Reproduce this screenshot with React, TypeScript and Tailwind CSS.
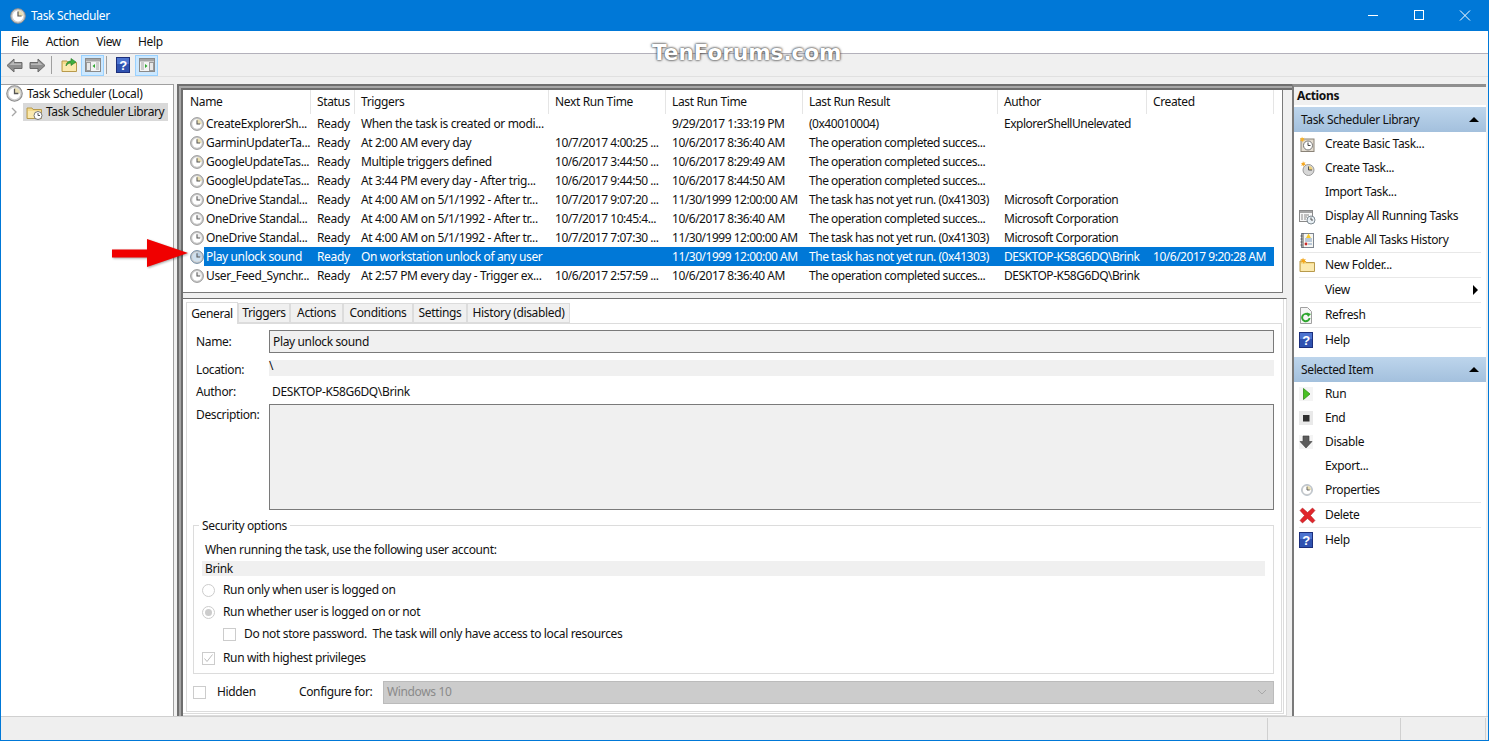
import type { ReactNode } from "react";

const tasks = [
  ["CreateExplorerSh...", "When the task is created or modi...", "", "9/29/2017 1:33:19 PM", "(0x40010004)", "ExplorerShellUnelevated", ""],
  ["GarminUpdaterTa...", "At 2:00 AM every day", "10/7/2017 4:00:25 ...", "10/6/2017 8:36:40 AM", "The operation completed succes...", "", ""],
  ["GoogleUpdateTas...", "Multiple triggers defined", "10/6/2017 3:44:50 ...", "10/6/2017 8:29:49 AM", "The operation completed succes...", "", ""],
  ["GoogleUpdateTas...", "At 3:44 PM every day - After trig...", "10/6/2017 9:44:50 ...", "10/6/2017 8:44:50 AM", "The operation completed succes...", "", ""],
  ["OneDrive Standal...", "At 4:00 AM on 5/1/1992 - After tr...", "10/7/2017 9:07:20 ...", "11/30/1999 12:00:00 AM", "The task has not yet run. (0x41303)", "Microsoft Corporation", ""],
  ["OneDrive Standal...", "At 4:00 AM on 5/1/1992 - After tr...", "10/7/2017 10:45:4...", "10/6/2017 8:36:40 AM", "The operation completed succes...", "Microsoft Corporation", ""],
  ["OneDrive Standal...", "At 4:00 AM on 5/1/1992 - After tr...", "10/7/2017 7:07:30 ...", "11/30/1999 12:00:00 AM", "The task has not yet run. (0x41303)", "Microsoft Corporation", ""],
  ["Play unlock sound", "On workstation unlock of any user", "", "11/30/1999 12:00:00 AM", "The task has not yet run. (0x41303)", "DESKTOP-K58G6DQ\\Brink", "10/6/2017 9:20:28 AM"],
  ["User_Feed_Synchr...", "At 2:57 PM every day - Trigger ex...", "10/6/2017 2:57:59 ...", "10/6/2017 8:36:40 AM", "The operation completed succes...", "DESKTOP-K58G6DQ\\Brink", ""],
];

const headers = [
  ["Name", "w-[127px]"],
  ["Status", "w-[44px]"],
  ["Triggers", "w-[194px]"],
  ["Next Run Time", "w-[117px]"],
  ["Last Run Time", "w-[137px]"],
  ["Last Run Result", "w-[195px]"],
  ["Author", "w-[149px]"],
  ["Created", "w-[127px]"],
];

function Clock({ size = 14, face = "#fff", rim = "#8d8d8d", wedge = "#e9dfb4" }: { size?: number; face?: string; rim?: string; wedge?: string }) {
  return (
    <svg width={size} height={size} viewBox="0 0 16 16" className="shrink-0">
      <circle cx="8" cy="8" r="7.3" fill="#cfcfcf" stroke={rim} />
      <circle cx="8" cy="8" r="5.4" fill={face} />
      <path d="M8 8V2.6A5.4 5.4 0 0 1 13.4 8Z" fill={wedge} />
      <path d="M8 3.6V8h3.6" fill="none" stroke="#555" strokeWidth="1.2" />
    </svg>
  );
}

function HelpIcon() {
  return (
    <svg width="14" height="16" viewBox="0 0 14 16" className="shrink-0">
      <rect x="0.5" y="0.5" width="13" height="15" fill="#2f52b0" stroke="#1c2f7c" />
      <path d="M1 1h12v6H1z" fill="#4d74d0" />
      <text x="7" y="13" textAnchor="middle" fontSize="13" fontWeight="700" fill="#fff" fontFamily="Liberation Sans">?</text>
    </svg>
  );
}

function NavArrow({ flip }: { flip?: boolean }) {
  return (
    <svg width="17" height="15" viewBox="0 0 17 15" className={flip ? "-scale-x-100" : ""}>
      <path d="M1 7.5 8 1v3.5h8v6H8V14Z" fill="#8f8f8f" stroke="#6b6b6b" />
      <path d="M3.5 7 8 3v2.5h7V7Z" fill="#b9b9b9" />
    </svg>
  );
}

function PaneToggle({ side }: { side: "left" | "right" }) {
  return (
    <svg width="16" height="14" viewBox="0 0 16 14">
      <rect x="0.5" y="0.5" width="15" height="13" fill="#f3f3f3" stroke="#8a8a8a" />
      <rect x="1" y="1" width="14" height="2.5" fill="#a5a5a5" />
      {side === "left" ? (
        <>
          <rect x="1.500" y="4.500" width="4" height="8" fill="#e8e8e8" stroke="#9a9a9a" />
          <path d="M10 6v4L7.500 8Z" fill="#2fa82f" />
          <path d="M11 5h3M11 7h3M11 9h3M11 11h3" stroke="#a5a5a5" />
        </>
      ) : (
        <>
          <rect x="10.500" y="4.500" width="4" height="8" fill="#e8e8e8" stroke="#9a9a9a" />
          <path d="M6 6v4l2.500-2Z" fill="#2fa82f" />
          <path d="M2 5h3M2 7h3M2 9h3M2 11h3" stroke="#a5a5a5" />
        </>
      )}
    </svg>
  );
}

function FolderIcon({ badge }: { badge?: "clock" | "up" | "new" }) {
  return (
    <svg width="17" height="16" viewBox="0 0 17 16" className="shrink-0">
      <path d="M1 4h5l1 1.500h8.500V14.500H1Z" fill="#f6dc8c" stroke="#b89a4c" />
      <path d="M2 7h13v7H2Z" fill="#fbe9ae" />
      {badge === "up" && <path d="M5 9c0-3 2-5 5-5V1.500L15 5l-5 3.500V6c-2 0-4 1-5 3Z" fill="#3fae3f" stroke="#257a25" strokeWidth="0.6" />}
      {badge === "new" && <path d="M4 0.500l.8 2 2-.6-1 1.800 1.700 1.200-2.100.3L5 7 3.800 5 1.700 5.500 2.900 3.700 1.300 2.300l2.200-.1Z" fill="#f2a51a" />}
      {badge === "clock" && (
        <g>
          <circle cx="12" cy="11.500" r="4" fill="#fff" stroke="#777" />
          <path d="M12 9v2.500h2" fill="none" stroke="#555" />
        </g>
      )}
    </svg>
  );
}

function ActionIcon({ name }: { name: string }) {
  if (name === "basic")
    return (
      <svg width="17" height="17" viewBox="0 0 17 17">
        <rect x="2" y="3" width="13" height="12.500" fill="#e3dcd0" stroke="#8a8378" />
        <circle cx="9" cy="9.500" r="4.500" fill="#fff" stroke="#777" />
        <path d="M9 6.500v3h2.500" fill="none" stroke="#444" />
        <path d="M3 0.500l.7 1.700 1.800-.5-.9 1.600 1.400 1.100-1.800.2L4 6.500 3 4.800l-1.900.4 1-1.600L.8 2.300l1.800-.1Z" fill="#f4b02a" />
      </svg>
    );
  if (name === "task")
    return (
      <svg width="17" height="17" viewBox="0 0 17 17">
        <circle cx="9.500" cy="10" r="5.500" fill="#d7d7d7" stroke="#9a9a9a" />
        <path d="M9.500 10V6a4 4 0 0 1 4 4Z" fill="#f0d27c" />
        <path d="M9.500 6.500V10H13" fill="none" stroke="#555" />
        <path d="M4 1l.7 1.700 1.800-.5-.9 1.600 1.400 1.100-1.800.2L5 7 4 5.300l-1.900.4 1-1.600-1.300-1 1.800-.1Z" fill="#f4a722" />
      </svg>
    );
  if (name === "running")
    return (
      <svg width="17" height="17" viewBox="0 0 17 17">
        <rect x="0.500" y="2.500" width="13" height="11" fill="#f7f7f7" stroke="#8a8a8a" />
        <rect x="1" y="3" width="12" height="2" fill="#a5a5a5" />
        <path d="M2 7h2M5 7h5M2 9h2M5 9h3M2 11h2M5 11h2" stroke="#888" />
        <circle cx="12" cy="12" r="4" fill="#e9f0f5" stroke="#7f8a92" />
        <path d="M12 9.500V12h2" fill="none" stroke="#555" />
      </svg>
    );
  if (name === "history")
    return (
      <svg width="17" height="17" viewBox="0 0 17 17">
        <rect x="2.500" y="1.500" width="12" height="14" fill="#f6f6f2" stroke="#7d8590" />
        <path d="M4 1v15M1.500 4h2M1.500 7h2M1.500 10h2M1.500 13h2" stroke="#555" />
        <path d="M6 7h7M6 9h7M9 12h4" stroke="#7f9bbf" />
        <path d="M9.500 1.500 12 6H7Z" fill="#f6c92c" />
        <circle cx="7" cy="12" r="1.400" fill="#c92a2a" />
      </svg>
    );
  if (name === "folder") return <FolderIcon badge="new" />;
  if (name === "refresh")
    return (
      <svg width="14" height="17" viewBox="0 0 14 17">
        <path d="M1.500.5h7l4 4v12h-11Z" fill="#f5f5f5" stroke="#a0a0a0" />
        <path d="M10.500 11A3.700 3.700 0 1 1 9.500 8" fill="none" stroke="#2ea52e" strokeWidth="2" />
        <path d="M8 5.500 12 7 9 10Z" fill="#2ea52e" />
      </svg>
    );
  if (name === "help") return <HelpIcon />;
  if (name === "run")
    return (
      <svg width="14" height="14" viewBox="0 0 14 14">
        <rect width="14" height="14" fill="#f4f4f4" />
        <path d="M4.500 1.500 11 7l-6.500 5.500Z" fill="#48c022" stroke="#2f8a14" strokeWidth="0.8" />
      </svg>
    );
  if (name === "end")
    return (
      <svg width="14" height="14" viewBox="0 0 14 14">
        <rect width="14" height="14" fill="#e9e9e9" />
        <rect x="4" y="4" width="6.500" height="6.500" fill="#2e2e2e" />
      </svg>
    );
  if (name === "disable")
    return (
      <svg width="14" height="14" viewBox="0 0 14 14">
        <rect width="14" height="14" fill="#f4f4f4" />
        <path d="M4 1h6v5.500h3L7 13 1 6.500h3Z" fill="#5c5c5c" stroke="#3e3e3e" strokeWidth="0.6" />
      </svg>
    );
  if (name === "props") return <span className="ml-[2px] flex"><Clock size={12} rim="#a9b6c2" /></span>;
  if (name === "delete")
    return (
      <svg width="17" height="17" viewBox="0 0 17 17">
        <path d="M1 3.500 3.500 1 8.500 5.500 13.500 1 16 3.500 11.500 8.500 16 13.500 13.500 16 8.500 11.500 3.500 16 1 13.500 5.500 8.500Z" fill="#e0262c" stroke="#a81c20" strokeWidth="0.5" />
      </svg>
    );
  return null;
}

function ActionRow({ icon, label, sep, caret, h = "h-6" }: { icon?: string; label: string; sep?: boolean; caret?: boolean; h?: string }) {
  return (
    <div className={`ml-[5px] mr-[5px] flex items-center ${h} ${sep ? "border-b border-[#e8e8e8]" : ""}`}>
      <span className="flex w-[26px] shrink-0 items-center">{icon && <ActionIcon name={icon} />}</span>
      <span>{label}</span>
      {caret && <span className="ml-auto mr-[3px] h-0 w-0 border-y-[5px] border-l-[5px] border-y-transparent border-l-black" />}
    </div>
  );
}

function SectionHeader({ label }: { label: string }) {
  return (
    <div className="flex h-[25px] items-center justify-between bg-gradient-to-b from-[#bdd5ec] to-[#a3c0dd] pl-[7px] pr-[7px]">
      <span>{label}</span>
      <span className="h-0 w-0 border-x-[5px] border-b-[5px] border-x-transparent border-b-black" />
    </div>
  );
}

function Radio({ on, children }: { on?: boolean; children: ReactNode }) {
  return (
    <div className="flex h-[22px] items-center">
      <span className="mr-2 flex h-[13px] w-[13px] items-center justify-center rounded-full border border-[#cccccc]">
        {on && <span className="h-[7px] w-[7px] rounded-full bg-[#cccccc]" />}
      </span>
      {children}
    </div>
  );
}

function Check({ on }: { on?: boolean }) {
  return (
    <span className="flex h-[13px] w-[13px] shrink-0 items-center justify-center border border-[#cccccc]">
      {on && (
        <svg width="11" height="11" viewBox="0 0 11 11">
          <path d="M1.500 5.500 4 8.500 9.500 1.500" fill="none" stroke="#bcbcbc" />
        </svg>
      )}
    </span>
  );
}

// concentric gray bands along the top and left of the center column
function Stripes({ children }: { children: ReactNode }) {
  return (
    <div className="ml-[3px] w-[1115px] shrink-0 border-t-2 border-l-2 border-[#6e6e6e]">
      <div className="h-full border-t-2 border-l-2 border-[#a6a6a6]">
        <div className="h-full border-t-2 border-l-2 border-[#6e6e6e]">{children}</div>
      </div>
    </div>
  );
}

export default function App() {
  return (
    <div className="relative flex h-[741px] w-[1489px] flex-col overflow-hidden border-x border-b border-[#0078d7] bg-[#f0f0f0] font-['Noto_Sans',sans-serif] text-[12px] tracking-[-0.36px] text-[#111]">
      <div className="flex h-[31px] shrink-0 items-center bg-[#0078d7] pl-[9px] text-white">
        <Clock size={16} />
        <span className="ml-[5px]">Task Scheduler</span>
        <div className="ml-auto flex items-center">
          <svg width="46" height="31" viewBox="0 0 46 31"><path d="M18 15.500h10" stroke="#fff" /></svg>
          <svg width="46" height="31" viewBox="0 0 46 31"><rect x="18.500" y="10.500" width="9" height="9" fill="none" stroke="#fff" /></svg>
          <svg width="46" height="31" viewBox="0 0 46 31"><path d="M18 10.500l10 10M28 10.500l-10 10" stroke="#fff" /></svg>
        </div>
      </div>

      <div className="flex h-[23px] shrink-0 items-center gap-[17px] border-b border-[#b3b1bb] bg-white pl-[10px]">
        <span>File</span>
        <span>Action</span>
        <span>View</span>
        <span>Help</span>
      </div>

      <div className="flex h-[23px] shrink-0 items-center border-b border-[#e0e0e0] bg-[#f0f0f0] pl-[5px]">
        <NavArrow />
        <span className="ml-[6px]"><NavArrow flip /></span>
        <span className="ml-[5px] h-[18px] w-px bg-[#a0a0a0]" />
        <span className="ml-[9px] flex"><FolderIcon badge="up" /></span>
        <span className="ml-[3px] flex h-[21px] w-[23px] items-center justify-center border border-[#99d1ff] bg-[#cce8ff]"><PaneToggle side="left" /></span>
        <span className="ml-[2px] h-[18px] w-px bg-[#a0a0a0]" />
        <span className="ml-[9px] flex"><HelpIcon /></span>
        <span className="ml-[5px] flex h-[21px] w-[23px] items-center justify-center border border-[#99d1ff] bg-[#cce8ff]"><PaneToggle side="right" /></span>
      </div>

      <div className="flex min-h-0 flex-1 pt-[7px]">
        <div className="h-full w-[173px] shrink-0 border-t border-r border-[#a0a0a0] bg-white">
          <div className="flex h-[17px] items-center pl-[5px]">
            <Clock size={17} />
            <span className="ml-[4px] whitespace-nowrap">Task Scheduler (Local)</span>
          </div>
          <div className="mt-px flex h-[18px] items-center pl-[9px]">
            <svg width="8" height="10" viewBox="0 0 8 10"><path d="M2 1l4 4-4 4" fill="none" stroke="#a6a6a6" strokeWidth="1.300" /></svg>
            <span className="ml-[5px] flex h-[18px] items-center whitespace-nowrap bg-[#d9d9d9] pr-[4px] pl-[3px]">
              <FolderIcon badge="clock" />
              <span className="ml-[3px]">Task Scheduler Library</span>
            </span>
          </div>
        </div>

        <Stripes>
          <div className="flex h-full flex-col">
            <div className="h-[203px] w-[1100px] shrink-0 border-r border-b border-[#7a7a7a] bg-white pl-px">
              <div className="flex h-[24px]">
                {headers.map(([label, w]) => (
                  <div key={label} className={`${w} flex shrink-0 items-center border-r border-[#e5e5e5] pl-[6px]`}>{label}</div>
                ))}
              </div>
              {tasks.map((t, i) => {
                const selected = i === 7;
                return (
                  <div key={i} className={`flex h-[19px] items-center whitespace-nowrap ${selected ? "text-white" : ""}`}>
                    <div className="flex w-[20px] shrink-0 pl-[6px]">
                      <Clock size={14} wedge={selected ? "#b9cfe3" : i < 4 ? "#e9dfb4" : "#ededed"} rim={selected ? "#5a7a98" : "#8d8d8d"} face={selected ? "#cfe0ee" : "#fff"} />
                    </div>
                    <div className={`flex h-full w-[1070px] items-center ${selected ? "bg-[#0078d7]" : ""}`}>
                      <span className="w-[107px] shrink-0 pl-[2px]">{t[0]}</span>
                      <span className="w-[44px] shrink-0 pl-[6px]">Ready</span>
                      <span className="w-[194px] shrink-0 pl-[6px]">{t[1]}</span>
                      <span className="w-[117px] shrink-0 pl-[6px] tracking-[-0.48px]">{t[2]}</span>
                      <span className="w-[137px] shrink-0 pl-[6px] tracking-[-0.48px]">{t[3]}</span>
                      <span className="w-[195px] shrink-0 pl-[6px] tracking-[-0.48px]">{t[4]}</span>
                      <span className="w-[149px] shrink-0 pl-[6px] tracking-[-0.48px]">{t[5]}</span>
                      <span className="shrink-0 pl-[6px] tracking-[-0.48px]">{t[6]}</span>
                    </div>
                  </div>
                );
              })}
            </div>

            <div className="mt-[5px] min-h-0 w-[1104px] flex-1 border-t border-r border-b border-t-[#6e6e6e] border-r-[#dcdcdc] border-b-[#dcdcdc] bg-white">
              <div className="flex h-[calc(100%-1px)] w-[1101px] flex-col border-r border-b border-[#dcdcdc] pl-[3px] pr-px">
                <div className="flex h-[24px] shrink-0 items-end">
                  {[
                    ["General", "w-[52px] h-[22px] bg-white border-b-0 z-10 -mb-px"],
                    ["Triggers", "w-[52px] h-[20px] bg-[#f0f0f0]"],
                    ["Actions", "w-[53px] h-[20px] bg-[#f0f0f0]"],
                    ["Conditions", "w-[70px] h-[20px] bg-[#f0f0f0]"],
                    ["Settings", "w-[54px] h-[20px] bg-[#f0f0f0]"],
                    ["History (disabled)", "w-[103px] h-[20px] bg-[#f0f0f0]"],
                  ].map(([label, cls]) => (
                    <div key={label} className={`flex items-center justify-center border border-[#dcdcdc] ${cls}`}>{label}</div>
                  ))}
                </div>
                <div className="flex min-h-0 flex-1 flex-col border border-[#dcdcdc] pl-[6px] pr-[7px] pt-[6px] mb-px">
                  <div className="flex h-[23px] items-center">
                    <span className="w-[76px] shrink-0 pl-[3px]">Name:</span>
                    <span className="flex h-full flex-1 items-center border border-[#7a7a7a] bg-[#f0f0f0] pl-[3px]">Play unlock sound</span>
                  </div>
                  <div className="mt-[7px] flex h-[16px] items-center">
                    <span className="w-[76px] shrink-0 pl-[3px] pt-[4px]">Location:</span>
                    <span className="flex h-full flex-1 items-center bg-[#f0f0f0] pb-[4px]">\</span>
                  </div>
                  <div className="mt-[8px] flex h-[16px] items-center">
                    <span className="w-[76px] shrink-0 pl-[3px]">Author:</span>
                    <span className="pl-[3px]">DESKTOP-K58G6DQ\Brink</span>
                  </div>
                  <div className="mt-[4px] flex h-[106px]">
                    <span className="w-[76px] shrink-0 pl-[3px] pt-[2px]">Description:</span>
                    <span className="flex-1 border border-[#7a7a7a] bg-[#f0f0f0]" />
                  </div>
                  <div className="relative mt-[15px] h-[149px] shrink-0 border border-[#dcdcdc] pt-[15px] pl-[8px] pr-[8px]">
                    <span className="absolute -top-[9px] left-[5px] bg-white px-[3px]">Security options</span>
                    <div className="pl-[3px]">When running the task, use the following user account:</div>
                    <div className="mt-[2px] flex h-[15px] items-center bg-[#f0f0f0] pl-[3px]">Brink</div>
                    <div className="mt-[3px]">
                      <Radio>Run only when user is logged on</Radio>
                      <Radio on>Run whether user is logged on or not</Radio>
                      <div className="flex h-[22px] items-center pl-[21px]">
                        <Check />
                        <span className="ml-2">Do not store password.&nbsp; The task will only have access to local resources</span>
                      </div>
                      <div className="mt-[2px] flex h-[22px] items-center">
                        <Check on />
                        <span className="ml-2">Run with highest privileges</span>
                      </div>
                    </div>
                  </div>
                  <div className="mt-[6px] flex h-[24px] shrink-0 items-center">
                    <Check />
                    <span className="ml-[11px] w-[82px] shrink-0">Hidden</span>
                    <span className="w-[84px] shrink-0">Configure for:</span>
                    <div className="flex h-[23px] flex-1 items-center justify-between border border-[#bbbbbb] bg-[#cccccc] pl-[3px] pr-[6px] text-[#8a8a8a]">
                      <span>Windows 10</span>
                      <svg width="10" height="6" viewBox="0 0 10 6"><path d="M1 1l4 4 4-4" fill="none" stroke="#a8a8a8" /></svg>
                    </div>
                  </div>
                </div>
              </div>
            </div>
          </div>
        </Stripes>

        <div className="flex w-[194px] shrink-0 flex-col border-t-[3px] border-l-2 border-t-[#8f8f8f] border-l-[#7a7a7a] bg-white">
          <div className="flex h-[18px] items-center bg-[#f0f0f0] pl-[3px] font-bold">Actions</div>
          <div className="mt-[2px]"><SectionHeader label="Task Scheduler Library" /></div>
          <ActionRow icon="basic" label="Create Basic Task..." />
          <ActionRow icon="task" label="Create Task..." />
          <ActionRow label="Import Task..." />
          <ActionRow icon="running" label="Display All Running Tasks" />
          <ActionRow icon="history" label="Enable All Tasks History" h="h-[25px]" sep />
          <ActionRow icon="folder" label="New Folder..." h="h-[25px]" sep />
          <ActionRow label="View" h="h-[25px]" caret sep />
          <ActionRow icon="refresh" label="Refresh" h="h-[25px]" sep />
          <ActionRow icon="help" label="Help" />
          <div className="mt-[5px]"><SectionHeader label="Selected Item" /></div>
          <ActionRow icon="run" label="Run" />
          <ActionRow icon="end" label="End" />
          <ActionRow icon="disable" label="Disable" />
          <ActionRow label="Export..." />
          <ActionRow icon="props" label="Properties" h="h-[25px]" sep />
          <ActionRow icon="delete" label="Delete" h="h-[25px]" sep />
          <ActionRow icon="help" label="Help" />
        </div>
      </div>

      <div className="flex h-[24px] shrink-0 justify-end border-t border-[#d0d0d0] bg-[#efefef]">
        <span className="mt-px w-[133px] border-l border-[#d0d0d0]" />
        <span className="mt-px w-[86px] border-x border-[#d0d0d0]" />
        <span className="w-[2px]" />
      </div>

      {/* red arrow pointing at the selected task */}
      <svg width="80" height="32" viewBox="0 0 80 32" className="absolute left-[110px] top-[238px] drop-shadow-[1px_1px_1px_rgba(0,0,0,0.35)]">
        <path d="M1 11.500h35V1l41 14-41 14V19.500H1Z" fill="#f00000" />
      </svg>

      <span className="absolute left-[651px] top-[37px] font-['DejaVu_Sans',sans-serif] text-[21.5px] font-bold tracking-[0px] text-white [text-shadow:0_0_3px_#444,0_0_2px_#444]">TenForums.com</span>
    </div>
  );
}
